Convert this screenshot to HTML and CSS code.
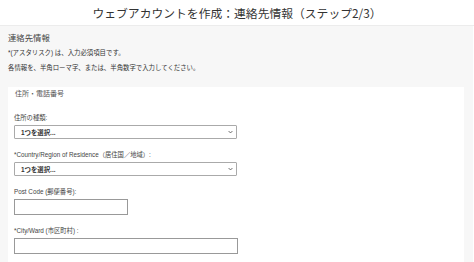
FILE: index.html
```
<!doctype html>
<html lang="ja">
<head>
    <meta charset="utf-8">
    <meta name="viewport" content="width=device-width, initial-scale=1">
    <title>ウェブアカウントを作成</title>
    <link rel="stylesheet" href="styles.css">
</head>
<body>

<header class="pageHeader">
    <h1>ウェブアカウントを作成：連絡先情報（ステップ2/3）</h1>
</header>

<main class="panel">
    <h2>連絡先情報</h2>
    <p class="note first">*(アスタリスク) は、入力必須項目です。</p>
    <p class="note">各情報を、半角ローマ字、または、半角数字で入力してください。</p>

    <form class="card" id="contactForm">
        <div class="cardTitle">住所・電話番号</div>

        <div class="field">
            <label for="addrType">住所の種類:</label>
            <div class="selectBox">
                <select id="addrType">
                    <option>1つを選択...</option>
                </select>
                <svg class="chevron" viewBox="0 0 8 6" width="5" height="4"><path d="M1 1.5 L4 4.5 L7 1.5" fill="none" stroke="#555" stroke-width="1.4"/></svg>
            </div>
        </div>

        <div class="field">
            <label for="country">*Country/Region of Residence（居住国／地域）:</label>
            <div class="selectBox">
                <select id="country">
                    <option>1つを選択...</option>
                </select>
                <svg class="chevron" viewBox="0 0 8 6" width="5" height="4"><path d="M1 1.5 L4 4.5 L7 1.5" fill="none" stroke="#555" stroke-width="1.4"/></svg>
            </div>
        </div>

        <div class="field">
            <label for="postCode">Post Code (郵便番号):</label>
            <input type="text" id="postCode" class="short">
        </div>

        <div class="field">
            <label for="city">*City/Ward (市区町村) :</label>
            <input type="text" id="city" class="wide">
        </div>
    </form>
</main>

</body>
</html>
```

FILE: styles.css
```
body {
    margin: 0;
    font-family: "Liberation Sans", "Noto Sans CJK JP", sans-serif;
    color: #333;
    background: #fff;
}

.pageHeader {
    height: 25px;
    border-bottom: 1px solid #ececec;
    display: flex;
    justify-content: center;
    align-items: center;
}

h1 {
    margin: 0;
    font-size: 11.8px;
    font-weight: normal;
    color: #333;
    font-family: "Noto Sans CJK JP", sans-serif;
}

.panel {
    background: #f7f7f7;
    margin-right: 1px;
    padding: 0 9px 0 8px;
    height: 236px;
    overflow: hidden;
}

h2 {
    margin: 0;
    padding-top: 5px;
    font-size: 8.4px;
    line-height: 12px;
    font-weight: normal;
    color: #444;
    font-family: "Noto Sans CJK JP", sans-serif;
}

.note {
    margin: 5px 0 0;
    font-size: 6.4px;
    line-height: 10px;
    color: #333;
}

.note.first {
    margin-top: 5px;
}

.card {
    background: #fff;
    margin-top: 14px;
    padding: 1px 6px 0;
    height: 200px;
}

.cardTitle {
    font-size: 7px;
    line-height: 12px;
    color: #555;
    padding: 0 1px 1px;
    margin-bottom: 12px;
}

.field {
    margin-bottom: 11px;
}

.field label {
    display: block;
    font-size: 6.3px;
    line-height: 10px;
    color: #444;
    margin-bottom: 2px;
}

.selectBox {
    position: relative;
    width: 223px;
}

.selectBox select {
    appearance: none;
    -webkit-appearance: none;
    display: block;
    width: 100%;
    height: 14px;
    margin: 0;
    padding: 0 0 0 6px;
    border: 1px solid #aaa;
    border-radius: 1px;
    background: #fff;
    font-family: "Liberation Sans", "Noto Sans CJK JP", sans-serif;
    font-size: 6.4px;
    font-weight: bold;
    color: #333;
}

.chevron {
    position: absolute;
    right: 4px;
    top: 5px;
}

.field input {
    display: block;
    height: 16px;
    margin: 0;
    padding: 0 4px;
    box-sizing: border-box;
    border: 1px solid #999;
    border-radius: 0;
    background: #fff;
}

.field input.short {
    width: 114px;
}

.field input.wide {
    width: 224px;
}
```
